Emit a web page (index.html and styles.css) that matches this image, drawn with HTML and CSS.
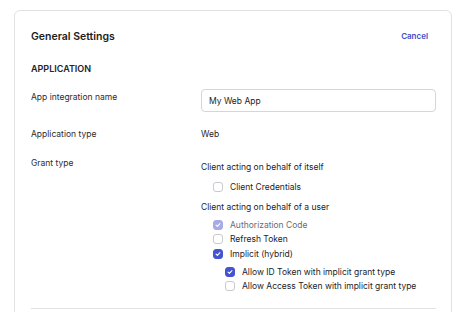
FILE: index.html
```html
<!DOCTYPE html>
<html lang="en">
<head>
    <meta charset="UTF-8">
    <meta name="viewport" content="width=device-width, initial-scale=1.0">
    <title>General Settings</title>
    <link rel="stylesheet" href="styles.css">
</head>
<body>
    <div class="settings-card">
        <div class="card-header">
            <h2>General Settings</h2>
            <a href="#" class="cancel-link">Cancel</a>
        </div>

        <h3 class="section-title">APPLICATION</h3>

        <div class="field-row first">
            <label for="appName">App integration name</label>
            <input type="text" id="appName" value="My Web App">
        </div>

        <div class="field-row">
            <span class="field-label">Application type</span>
            <span class="field-value">Web</span>
        </div>

        <div class="field-row">
            <span class="field-label">Grant type</span>
            <div class="grant-options">
                <div class="group-heading">Client acting on behalf of itself</div>
                <div class="check-list first-list">
                    <div class="check-item">
                        <span class="check-box"></span>
                        <span>Client Credentials</span>
                    </div>
                </div>

                <div class="group-heading second">Client acting on behalf of a user</div>
                <div class="check-list user-list">
                    <div class="check-item disabled">
                        <span class="check-box checked">
                            <svg viewBox="0 0 10 10"><path d="M2.6 5.2 L4.3 6.8 L7.4 3.4"/></svg>
                        </span>
                        <span>Authorization Code</span>
                    </div>
                    <div class="check-item">
                        <span class="check-box"></span>
                        <span>Refresh Token</span>
                    </div>
                    <div class="check-item">
                        <span class="check-box checked">
                            <svg viewBox="0 0 10 10"><path d="M2.6 5.2 L4.3 6.8 L7.4 3.4"/></svg>
                        </span>
                        <span>Implicit (hybrid)</span>
                    </div>
                    <div class="check-list nested">
                        <div class="check-item">
                            <span class="check-box checked">
                                <svg viewBox="0 0 10 10"><path d="M2.6 5.2 L4.3 6.8 L7.4 3.4"/></svg>
                            </span>
                            <span>Allow ID Token with implicit grant type</span>
                        </div>
                        <div class="check-item">
                            <span class="check-box"></span>
                            <span>Allow Access Token with implicit grant type</span>
                        </div>
                    </div>
                </div>
            </div>
        </div>

        <hr class="divider">
    </div>
</body>
</html>
```

FILE: styles.css
```css
body {
    margin: 0;
    height: 312px;
    overflow: hidden;
    background-color: #fff;
    font-family: Inter, "Noto Sans", sans-serif;
    font-size: 8.5px;
    color: #232328;
}

.settings-card {
    margin: 10px 0 0 14px;
    width: 438px;
    height: 320px;
    box-sizing: border-box;
    border: 1px solid #e2e2e4;
    border-radius: 6px;
    padding: 17px 15px 0 16px;
}

.card-header {
    display: flex;
    justify-content: space-between;
    align-items: center;
    height: 16px;
    padding-right: 8px;
}

.card-header h2 {
    margin: 0;
    font-size: 10.5px;
    font-weight: 600;
    color: #1d1d21;
}

.cancel-link {
    color: #3f4fc6;
    font-weight: 600;
    font-size: 8px;
    text-decoration: none;
}

.section-title {
    margin: 18px 0 0;
    font-size: 9px;
    line-height: 14px;
    font-weight: 600;
}

.field-row {
    display: flex;
    align-items: flex-start;
    margin-top: 15px;
    line-height: 14px;
}

.field-row.first {
    margin-top: 13px;
}

.field-row label,
.field-row .field-label {
    flex: 0 0 170px;
    color: #2b2b30;
}

.field-row.first label {
    padding-top: 1px;
}

.field-row input[type="text"] {
    flex: 1;
    height: 23px;
    box-sizing: border-box;
    border: 1px solid #d6d6d9;
    border-radius: 4px;
    padding: 0 7px;
    font-family: inherit;
    font-size: 8.5px;
    color: #1d1d21;
    outline: none;
}

.grant-options {
    padding-top: 4px;
}

.group-heading.second {
    margin-top: 5px;
}

.check-list {
    padding-left: 12px;
}

.first-list {
    margin-top: 6px;
}

.user-list {
    margin-top: 4px;
}

.check-item {
    display: flex;
    align-items: center;
    gap: 7px;
    line-height: 14.5px;
}

.check-item.disabled {
    color: #6b6b74;
}

.check-box {
    width: 10px;
    height: 10px;
    box-sizing: border-box;
    border: 1px solid #c9c9cf;
    border-radius: 3px;
    background: #fff;
    display: flex;
}

.check-box.checked {
    background: #4454d0;
    border-color: #4454d0;
}

.disabled .check-box.checked {
    background: #a6abe6;
    border-color: #a6abe6;
}

.check-box svg {
    width: 100%;
    height: 100%;
    fill: none;
    stroke: #fff;
    stroke-width: 1.4;
    stroke-linecap: round;
    stroke-linejoin: round;
}

.check-list.nested {
    margin-top: 3.5px;
}

.divider {
    margin: 14px 0 0;
    border: none;
    border-top: 1px solid #e2e2e4;
}
```
